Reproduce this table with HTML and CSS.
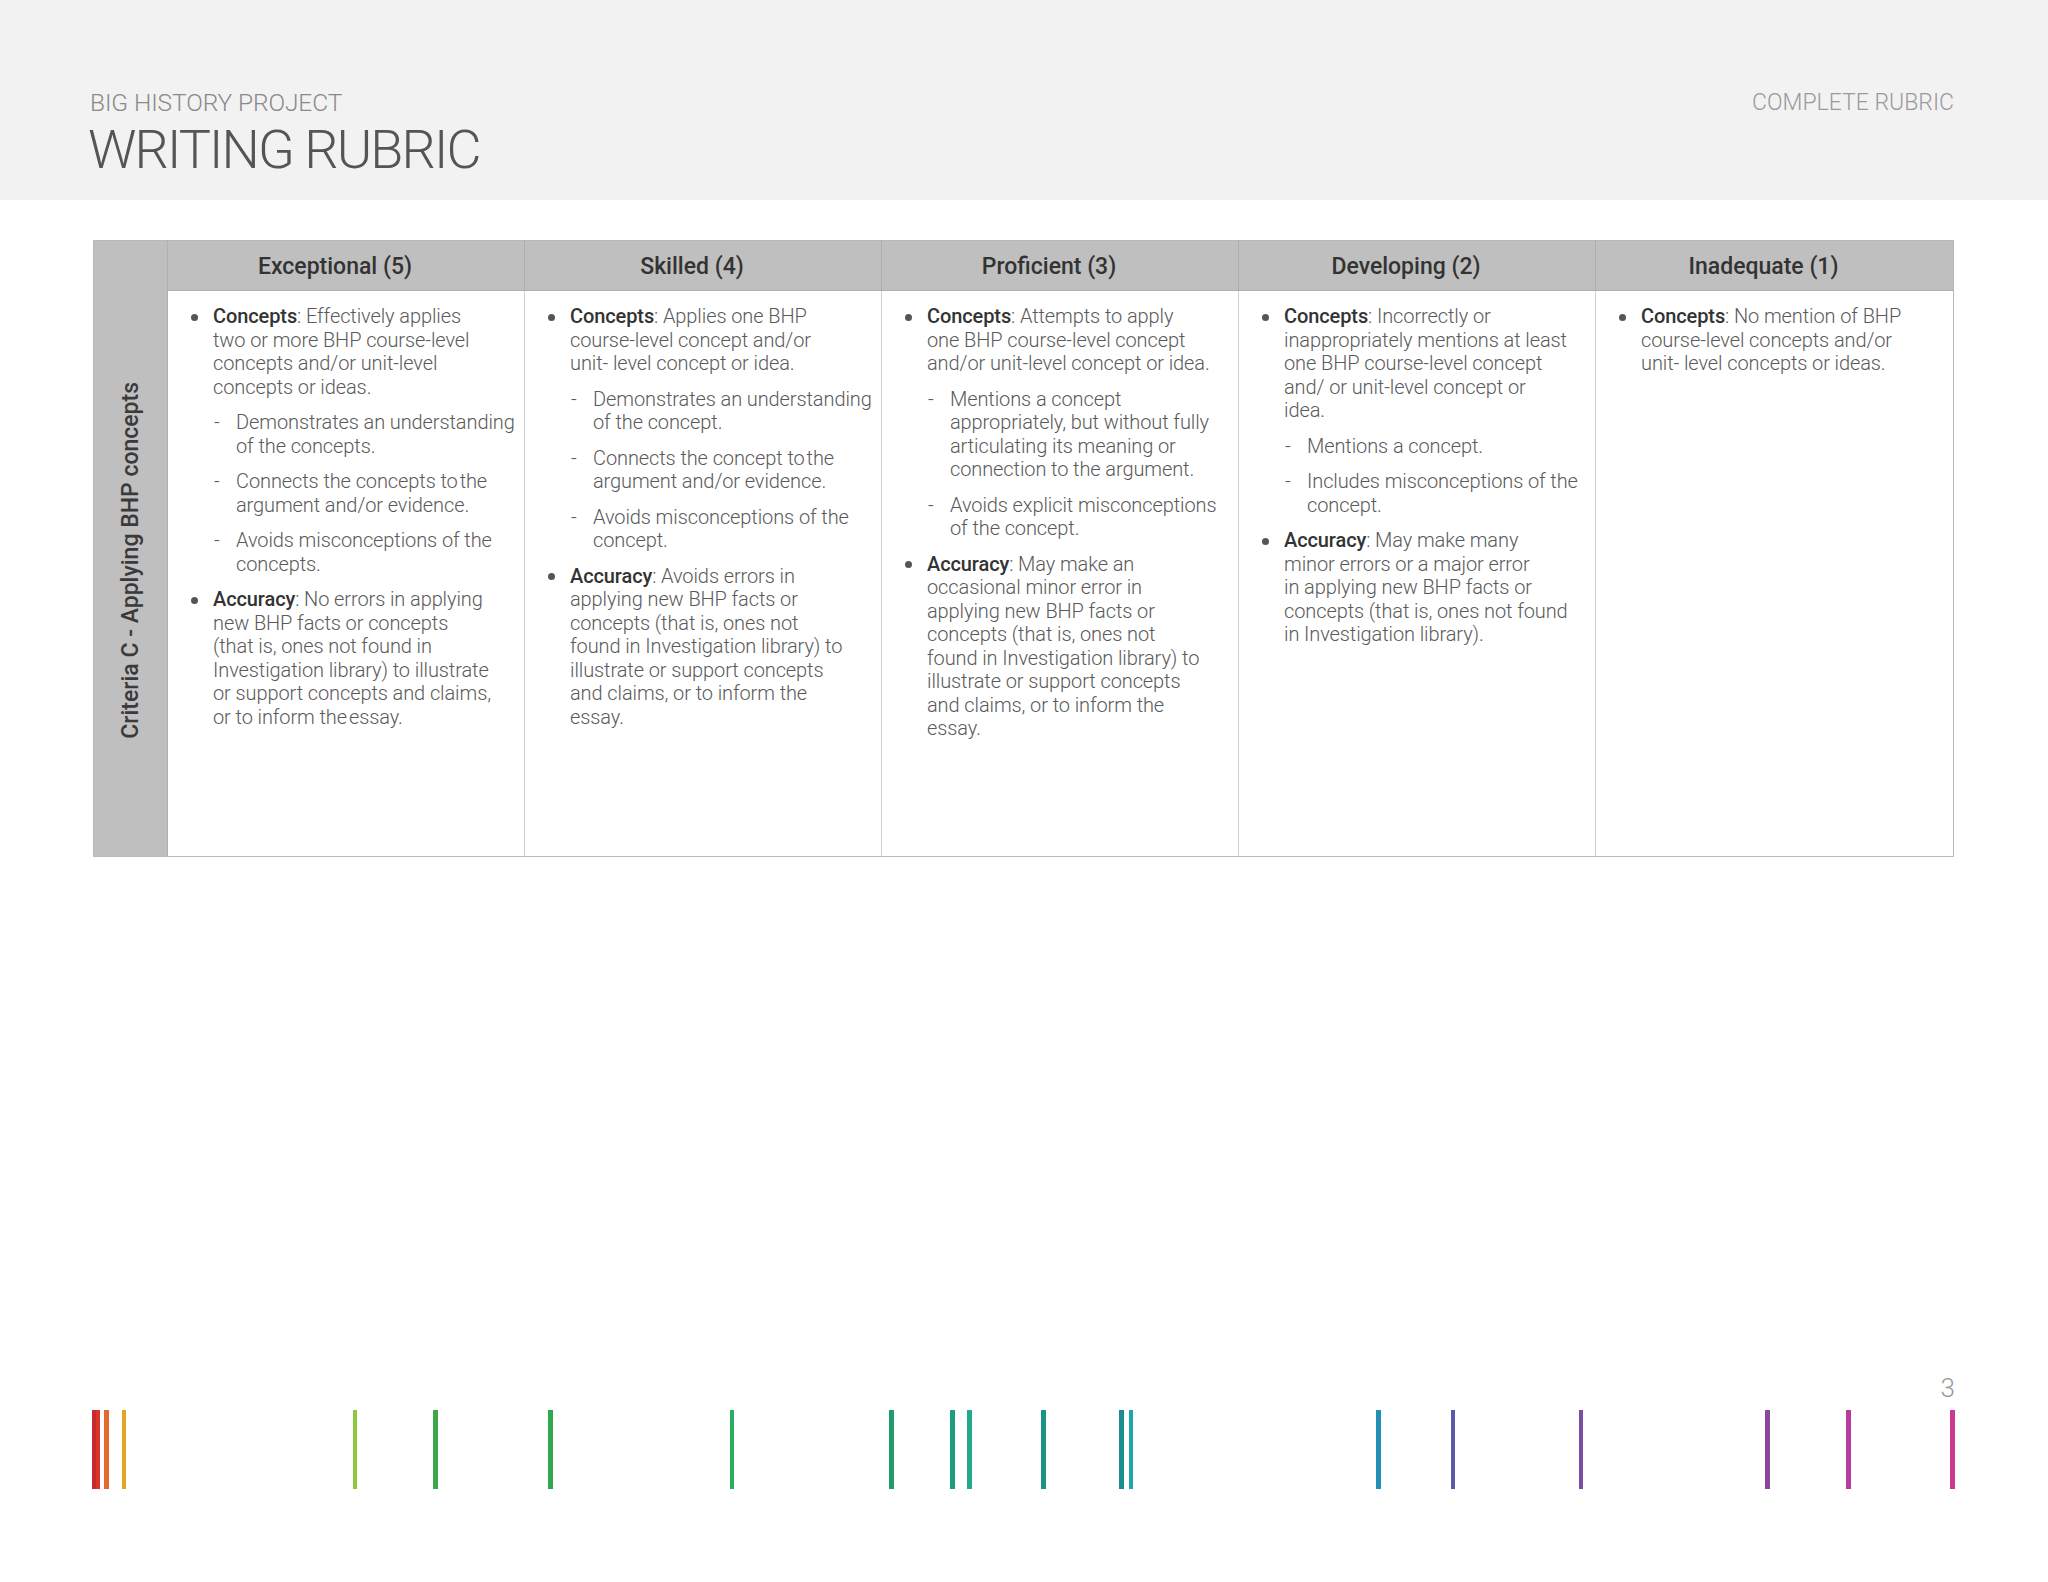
FILE: index.html
```html
<!DOCTYPE html>
<html>
<head>
<meta charset="utf-8">
<link rel="stylesheet" href="styles.css">
</head>
<body>
<header class="band">
  <div class="band-left">
    <div class="kicker">BIG HISTORY PROJECT</div>
    <h1 class="title">WRITING RUBRIC</h1>
  </div>
  <div class="band-right">COMPLETE RUBRIC</div>
</header>

<main class="rubric">
  <div class="criteria"><span class="criteria-label">Criteria C - Applying BHP concepts</span></div>
  <div class="hd">Exceptional (5)</div>
  <div class="hd">Skilled (4)</div>
  <div class="hd">Proficient (3)</div>
  <div class="hd">Developing (2)</div>
  <div class="hd hd-last">Inadequate (1)</div>

  <div class="cell">
    <div class="item"><span class="dot"></span><div class="txt"><b>Concepts</b>: Effectively applies<br>two or more BHP course-level<br>concepts and/or unit-level<br>concepts or ideas.
      <div class="sub"><span class="dash">-</span><div class="txt">Demonstrates an understanding<br>of the concepts.</div></div>
      <div class="sub"><span class="dash">-</span><div class="txt">Connects the concepts to&#8202;the<br>argument and/or evidence.</div></div>
      <div class="sub"><span class="dash">-</span><div class="txt">Avoids misconceptions of the<br>concepts.</div></div>
    </div></div>
    <div class="item"><span class="dot"></span><div class="txt"><b>Accuracy</b>: No errors in applying<br>new BHP facts or concepts<br>(that is, ones not found in<br>Investigation library) to illustrate<br>or support concepts and claims,<br>or to inform the&#8202;essay.</div></div>
  </div>

  <div class="cell">
    <div class="item"><span class="dot"></span><div class="txt"><b>Concepts</b>: Applies one BHP<br>course-level concept and/or<br>unit- level concept or idea.
      <div class="sub"><span class="dash">-</span><div class="txt">Demonstrates an understanding<br>of the concept.</div></div>
      <div class="sub"><span class="dash">-</span><div class="txt">Connects the concept to&#8202;the<br>argument and/or evidence.</div></div>
      <div class="sub"><span class="dash">-</span><div class="txt">Avoids misconceptions of the<br>concept.</div></div>
    </div></div>
    <div class="item"><span class="dot"></span><div class="txt"><b>Accuracy</b>: Avoids errors in<br>applying new BHP facts or<br>concepts (that is, ones not<br>found in Investigation library) to<br>illustrate or support concepts<br>and claims, or to inform the<br>essay.</div></div>
  </div>

  <div class="cell">
    <div class="item"><span class="dot"></span><div class="txt"><b>Concepts</b>: Attempts to apply<br>one BHP course-level concept<br>and/or unit-level concept or idea.
      <div class="sub"><span class="dash">-</span><div class="txt">Mentions a concept<br>appropriately, but without fully<br>articulating its meaning or<br>connection to the argument.</div></div>
      <div class="sub"><span class="dash">-</span><div class="txt">Avoids explicit misconceptions<br>of the concept.</div></div>
    </div></div>
    <div class="item"><span class="dot"></span><div class="txt"><b>Accuracy</b>: May make an<br>occasional minor error in<br>applying new BHP facts or<br>concepts (that is, ones not<br>found in Investigation library) to<br>illustrate or support concepts<br>and claims, or to inform the<br>essay.</div></div>
  </div>

  <div class="cell">
    <div class="item"><span class="dot"></span><div class="txt"><b>Concepts</b>: Incorrectly or<br>inappropriately mentions at least<br>one BHP course-level concept<br>and/ or unit-level concept or<br>idea.
      <div class="sub"><span class="dash">-</span><div class="txt">Mentions a concept.</div></div>
      <div class="sub"><span class="dash">-</span><div class="txt">Includes misconceptions of the<br>concept.</div></div>
    </div></div>
    <div class="item"><span class="dot"></span><div class="txt"><b>Accuracy</b>: May make many<br>minor errors or a major error<br>in applying new BHP facts or<br>concepts (that is, ones not found<br>in Investigation library).</div></div>
  </div>

  <div class="cell cell-last">
    <div class="item"><span class="dot"></span><div class="txt"><b>Concepts</b>: No mention of BHP<br>course-level concepts and/or<br>unit- level concepts or ideas.</div></div>
  </div>
</main>

<footer class="foot">
  <div class="pagenum">3</div>
  <svg class="bars" width="2048" height="79" viewBox="0 0 2048 79">
    <rect x="92" y="0" width="4" height="79" fill="#c42a2e"/>
    <rect x="96" y="0" width="4" height="79" fill="#d9352b"/>
    <rect x="104" y="0" width="5" height="79" fill="#e4692c"/>
    <rect x="122" y="0" width="4" height="79" fill="#e2a823"/>
    <rect x="353" y="0" width="4" height="79" fill="#8dc63f"/>
    <rect x="433" y="0" width="5" height="79" fill="#3ca84a"/>
    <rect x="548" y="0" width="5" height="79" fill="#2fa84d"/>
    <rect x="730" y="0" width="4" height="79" fill="#2bae5f"/>
    <rect x="889" y="0" width="5" height="79" fill="#1f9d6c"/>
    <rect x="950" y="0" width="5" height="79" fill="#1d9f7b"/>
    <rect x="967" y="0" width="5" height="79" fill="#24a98e"/>
    <rect x="1041" y="0" width="5" height="79" fill="#1b9488"/>
    <rect x="1119" y="0" width="5" height="79" fill="#1b8d92"/>
    <rect x="1129" y="0" width="4" height="79" fill="#20a4ad"/>
    <rect x="1376" y="0" width="5" height="79" fill="#2391b3"/>
    <rect x="1451" y="0" width="4" height="79" fill="#5b5aa8"/>
    <rect x="1579" y="0" width="4" height="79" fill="#7a4ea6"/>
    <rect x="1765" y="0" width="5" height="79" fill="#8c479d"/>
    <rect x="1846" y="0" width="5" height="79" fill="#b83c9c"/>
    <rect x="1950" y="0" width="5" height="79" fill="#cb3a8e"/>
  </svg>
</footer>
</body>
</html>
```

FILE: styles.css
```css
* { box-sizing: border-box; }
html, body { margin: 0; padding: 0; background: #ffffff; }
body {
  width: 2048px;
  height: 1582px;
  overflow: hidden;
  font-family: Roboto, "Liberation Sans", sans-serif;
  color: #5a5a5a;
}

.band {
  height: 200px;
  background: #f2f2f2;
  display: flex;
  justify-content: space-between;
  padding: 91px 94px 0 90px;
}
.kicker {
  font-size: 24.5px;
  line-height: 24px;
  font-weight: 300;
  color: #8a8a8a;
  letter-spacing: -0.1px;
}
.title {
  margin: 8px 0 0 -2px;
  font-size: 54px;
  line-height: 54px;
  font-weight: 300;
  color: #555555;
  letter-spacing: -1.9px;
}
.band-right {
  font-size: 23px;
  line-height: 24px;
  font-weight: 300;
  color: #9a9a9a;
  letter-spacing: 0;
}

.rubric {
  margin: 40px 0 0 93px;
  width: 1861px;
  height: 617px;
  display: grid;
  grid-template-columns: 74px repeat(5, 1fr);
  grid-template-rows: 50px 1fr;
  border: 1px solid #b8b8b8;
}
.criteria {
  grid-row: 1 / span 2;
  background: #bfbfbf;
  display: flex;
  align-items: center;
  justify-content: center;
  padding-top: 24px;
  border-right: 1px solid #b0b0b0;
}
.criteria-label {
  writing-mode: vertical-rl;
  transform: rotate(180deg);
  font-size: 23px;
  font-weight: 500;
  color: #3a3a3a;
  white-space: nowrap;
}
.hd {
  background: #bfbfbf;
  display: flex;
  align-items: center;
  justify-content: center;
  font-size: 23px;
  font-weight: 500;
  color: #333333;
  border-right: 1px solid #adadad;
  border-bottom: 1px solid #b0b0b0;
  padding: 1px 22px 0 0;
}
.hd-last { border-right: none; }

.cell {
  padding: 14px 4px 0 23px;
  border-right: 1px solid #d0d0d0;
  font-size: 20px;
  line-height: 23.5px;
  font-weight: 300;
  color: #5a5a5a;
  letter-spacing: -0.1px;
  white-space: nowrap;
}
.cell-last { border-right: none; }
.cell b { font-weight: 500; color: #333333; }

.item { display: flex; }
.item + .item { margin-top: 12px; }
.dot {
  flex: 0 0 22px;
  height: 23.5px;
  display: flex;
  align-items: center;
}
.dot::before {
  content: "";
  width: 7px;
  height: 7px;
  border-radius: 50%;
  background: #555555;
  margin-top: 1px;
}
.txt { flex: 1; }
.sub { display: flex; margin-top: 12px; }
.dash {
  flex: 0 0 23px;
  padding-left: 1px;
}

.foot {
  margin-top: 518px;
}
.pagenum {
  width: 1955px;
  text-align: right;
  font-size: 26px;
  line-height: 26px;
  font-weight: 300;
  color: #9a9a9a;
}
.bars {
  display: block;
  margin-top: 9px;
}
```
